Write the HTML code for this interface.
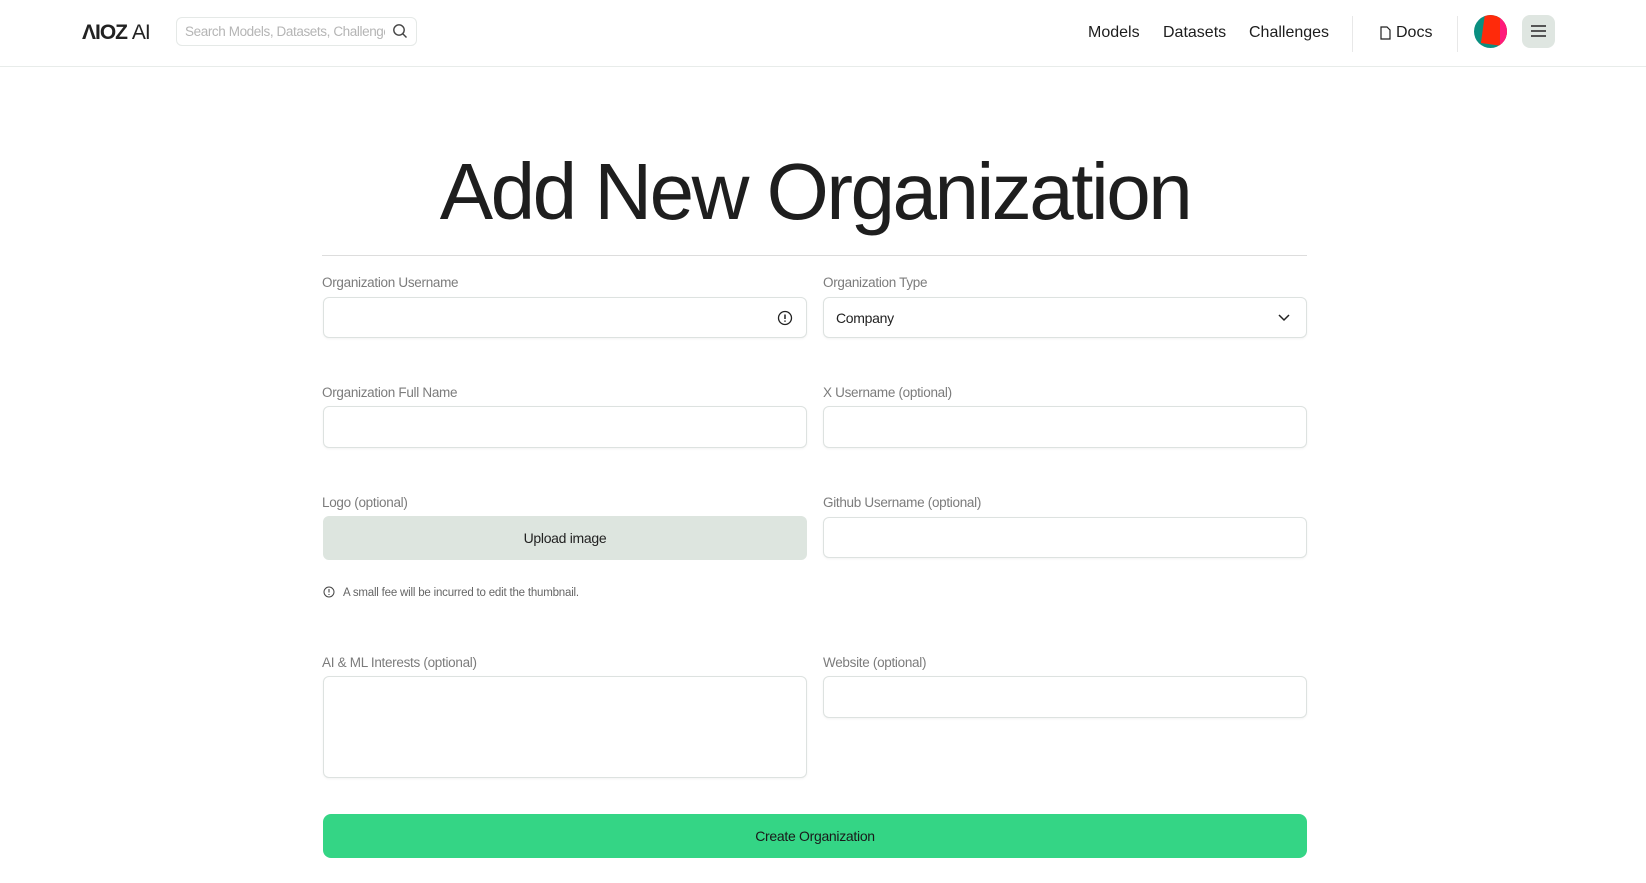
<!DOCTYPE html>
<html><head><style>
*{box-sizing:border-box;margin:0;padding:0}
body{width:1646px;height:883px;background:#fff;font-family:"Liberation Sans",sans-serif;color:#222;position:relative;overflow:hidden}
.abs{position:absolute}
header{position:absolute;left:0;top:0;width:1646px;height:67px;border-bottom:1px solid #e8ecea}
.nav{font-size:16px;color:#1d1d1d;top:24px}
.lbl{position:absolute;font-size:13.5px;color:#7c7c7c;letter-spacing:-0.3px}
.inp{position:absolute;border:1px solid #dde2e0;border-radius:6px;background:#fff;box-shadow:0 1px 2px rgba(0,0,0,.05)}
</style></head><body>
<header>
<div class="abs" style="left:82px;top:21px;font-size:21px;font-weight:bold;letter-spacing:-1px;color:#222">ΛIOZ <span style="font-weight:normal">AI</span></div>
<div class="abs" style="left:176px;top:17px;width:241px;height:29px;border:1px solid #e5e9e7;border-radius:6px;"><span class="abs" style="left:8px;top:6px;font-size:13.5px;color:#b5b5b5;letter-spacing:-0.4px;white-space:nowrap;width:200px;overflow:hidden">Search Models, Datasets, Challenges</span>
<svg class="abs" style="left:215px;top:5px" width="16" height="16" viewBox="0 0 16 16"><circle cx="7" cy="7" r="5.2" fill="none" stroke="#444" stroke-width="1.4"/><path d="M11 11l3.5 3.5" stroke="#444" stroke-width="1.4"/></svg></div>
<div class="abs nav" style="left:1088px">Models</div>
<div class="abs nav" style="left:1163px">Datasets</div>
<div class="abs nav" style="left:1249px">Challenges</div>
<div class="abs" style="left:1352px;top:16px;width:1px;height:36px;background:#e8e8e8"></div>
<svg class="abs" style="left:1380px;top:26px" width="11" height="14" viewBox="0 0 11 14"><path d="M1 1h6l3 3v9H1z" fill="none" stroke="#222" stroke-width="1.2"/></svg>
<div class="abs nav" style="left:1396px">Docs</div>
<div class="abs" style="left:1457px;top:16px;width:1px;height:36px;background:#e8e8e8"></div>
<div class="abs" style="left:1474px;top:15px;width:33px;height:33px;border-radius:50%;background:#0a8f80;overflow:hidden"><div class="abs" style="left:9px;top:-2px;width:26px;height:32px;background:#ff2a0a;transform:rotate(8deg)"></div><div class="abs" style="left:26px;top:0;width:10px;height:33px;background:#ff1a7a"></div></div>
<div class="abs" style="left:1522px;top:15px;width:33px;height:33px;border-radius:8px;background:#dfe6e1"><div class="abs" style="left:9px;top:10px;width:15px;height:2px;background:#555;box-shadow:0 5px 0 #555,0 10px 0 #555"></div></div>
</header>
<div class="abs" style="left:0;width:1630px;top:146px;text-align:center;font-size:80px;letter-spacing:-2.5px;color:#1e1e1e">Add New Organization</div>
<div class="abs" style="left:322px;top:255px;width:985px;height:1px;background:#ddd"></div>

<div class="lbl" style="left:322px;top:275px">Organization Username</div>
<div class="inp" style="left:323px;top:297px;width:484px;height:41px"><svg class="abs" style="left:453px;top:12px" width="16" height="16" viewBox="0 0 16 16"><circle cx="8" cy="8" r="6.5" fill="none" stroke="#222" stroke-width="1.3"/><path d="M8 4.5v4.5M8 10.5v1.2" stroke="#222" stroke-width="1.5"/></svg></div>
<div class="lbl" style="left:823px;top:275px">Organization Type</div>
<div class="inp" style="left:823px;top:297px;width:484px;height:41px"><span class="abs" style="left:12px;top:12px;font-size:14px;color:#222;letter-spacing:-0.3px">Company</span><svg class="abs" style="left:453px;top:15px" width="14" height="10" viewBox="0 0 14 10"><path d="M2 2l5 5 5-5" fill="none" stroke="#222" stroke-width="1.5"/></svg></div>

<div class="lbl" style="left:322px;top:385px">Organization Full Name</div>
<div class="inp" style="left:323px;top:406px;width:484px;height:42px"></div>
<div class="lbl" style="left:823px;top:385px">X Username (optional)</div>
<div class="inp" style="left:823px;top:406px;width:484px;height:42px"></div>

<div class="lbl" style="left:322px;top:495px">Logo (optional)</div>
<div class="abs" style="left:323px;top:516px;width:484px;height:44px;border-radius:6px;background:#dde5df;text-align:center;line-height:44px;font-size:14px;color:#222;letter-spacing:-0.3px">Upload image</div>
<div class="lbl" style="left:823px;top:495px">Github Username (optional)</div>
<div class="inp" style="left:823px;top:517px;width:484px;height:41px"></div>

<svg class="abs" style="left:323px;top:586px" width="12" height="12" viewBox="0 0 12 12"><circle cx="6" cy="6" r="5" fill="none" stroke="#444" stroke-width="1"/><path d="M6 3v3.5M6 8v1" stroke="#444" stroke-width="1.1"/></svg>
<div class="abs" style="left:343px;top:587px;font-size:11.5px;color:#666;letter-spacing:-0.2px">A small fee will be incurred to edit the thumbnail.</div>

<div class="lbl" style="left:322px;top:655px">AI &amp; ML Interests (optional)</div>
<div class="inp" style="left:323px;top:676px;width:484px;height:102px"></div>
<div class="lbl" style="left:823px;top:655px">Website (optional)</div>
<div class="inp" style="left:823px;top:676px;width:484px;height:42px"></div>

<div class="abs" style="left:323px;top:814px;width:984px;height:44px;border-radius:8px;background:#34d585;text-align:center;line-height:44px;font-size:14px;color:#1a1a1a;letter-spacing:-0.3px">Create Organization</div>
</body></html>
